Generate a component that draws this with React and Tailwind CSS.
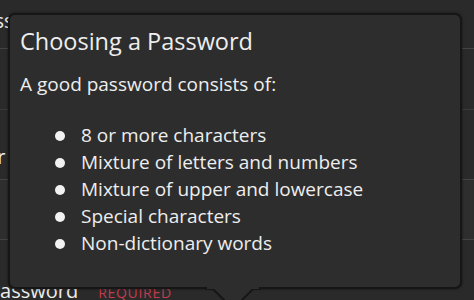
const ITEMS = [
  '8 or more characters',
  'Mixture of letters and numbers',
  'Mixture of upper and lowercase',
  'Special characters',
  'Non-dictionary words',
];

export default function App() {
  return (
    <div
      className="relative h-[300px] w-[474px] overflow-hidden bg-[#2a2a2a] text-[#eeeeee]"
      style={{ fontFamily: '"Open Sans", "Noto Sans", sans-serif' }}
    >
      {/* page underneath the popover */}
      <div className="flex flex-col">
        <div className="flex h-[49px] items-start border-b border-[#444] pt-[9px]">
          <span className="ml-[-62px] text-[20px] leading-[24px]">Address</span>
        </div>
        <div className="h-[61px] border-b border-[#3a3a3a]" />
        <div className="flex h-[70px] items-end border-b border-[#444] pb-[10px]">
          <span className="ml-[-38px] text-[20px] leading-[24px]">User</span>
        </div>
        <div className="h-[60px] border-b border-[#444] bg-[#2e2e2e]" />
        <div className="flex h-[60px] items-end gap-5">
          <span className="ml-[-12px] translate-y-[3px] text-[20px] leading-[24px]">Password</span>
          <span className="translate-y-[3px] text-[14px] tracking-wider text-[#c63a4c]">
            REQUIRED
          </span>
        </div>
      </div>

      {/* popover */}
      <div className="absolute left-[8px] top-[13px] h-[276px] w-[454px] rounded-[7px] border-2 border-[#161616] bg-[#2d2d2d] px-[10px] pt-[11px] shadow-[0_0_3px_rgba(0,0,0,0.5)]">
        <h2 className="text-[23.5px] leading-[30px]">Choosing a Password</h2>
        <p className="mt-[15px] text-[19px] leading-[26px]">A good password consists of:</p>
        <ul className="mt-[25px] flex flex-col">
          {ITEMS.map((t) => (
            <li key={t} className="flex h-[27px] items-center text-[19px]">
              <span className="ml-[35px] h-[10px] w-[10px] shrink-0 rounded-full bg-[#f2f2f2]" />
              <span className="ml-[16px]">{t}</span>
            </li>
          ))}
        </ul>
      </div>

      {/* arrow */}
      <svg className="absolute left-[205px] top-[286px]" width="56" height="20" viewBox="0 0 56 20">
        <path d="M0 2 L8 2 L22 18 L34 18 L48 2 L56 2" fill="#2d2d2d" stroke="none" />
        <path d="M0 3 L8 3 L21 16 M35 16 L48 3 L56 3" fill="none" stroke="#161616" strokeWidth="2" />
        <rect x="2" y="0" width="52" height="3" fill="#2d2d2d" />
      </svg>
    </div>
  );
}
